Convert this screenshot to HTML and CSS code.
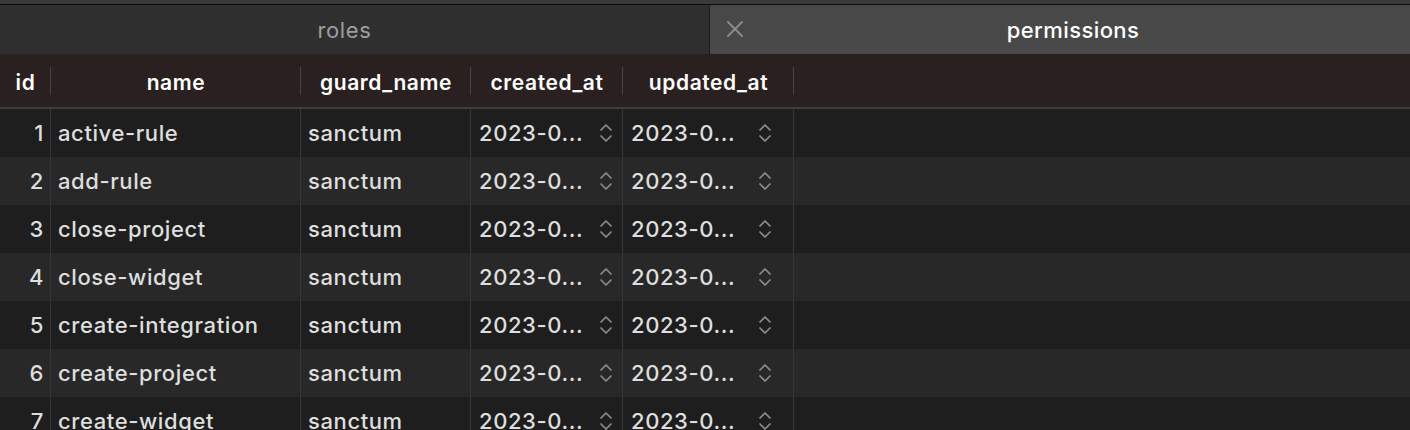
FILE: index.html
```html
<!DOCTYPE html>
<html>
<head>
<meta charset="utf-8">
<link rel="stylesheet" href="styles.css">
</head>
<body>
<div class="app">
  <div class="topstrip"></div>
  <div class="tabs">
    <div class="tab tab-inactive">roles</div>
    <div class="tab tab-active">
      <svg class="close" viewBox="0 0 20 20" width="20" height="20"><path d="M3 3 L17 17 M17 3 L3 17" stroke="#8a8a8a" stroke-width="2" fill="none" stroke-linecap="round"/></svg>
      <span>permissions</span>
    </div>
  </div>
  <div class="grid head">
    <div class="hc">id</div>
    <div class="hc">name</div>
    <div class="hc">guard_name</div>
    <div class="hc">created_at</div>
    <div class="hc">updated_at</div>
    <div class="hc last"></div>
  </div>
  <div class="body" id="body"></div>
</div>
<script src="app.js"></script>
</body>
</html>
```
FILE: app.js
```js
const names = ["active-rule","add-rule","close-project","close-widget","create-integration","create-project","create-widget"];
const spin = '<svg class="spin" viewBox="0 0 16 24" width="16" height="24"><path d="M3 9 L8 4 L13 9 M3 15 L8 20 L13 15" stroke="#8c8c8c" stroke-width="1.7" fill="none" stroke-linecap="round" stroke-linejoin="round"/></svg>';
const body = document.getElementById('body');
names.forEach((n, i) => {
  const r = document.createElement('div');
  r.className = 'grid row ' + (i % 2 ? 'even' : 'odd');
  r.innerHTML =
    '<div class="c id">' + (i + 1) + '</div>' +
    '<div class="c">' + n + '</div>' +
    '<div class="c">sanctum</div>' +
    '<div class="c date d1"><span>2023-0...</span>' + spin + '</div>' +
    '<div class="c date d2"><span>2023-0...</span>' + spin + '</div>' +
    '<div class="c last"></div>';
  body.appendChild(r);
});
```
FILE: styles.css
```css
* { box-sizing: border-box; }
html, body { margin: 0; padding: 0; background: #1e1e1e; }
body { font-family: Inter, "Noto Sans", sans-serif; overflow: hidden; width: 1410px; height: 430px; }
.app { width: 1410px; }
.topstrip { background: #3a3838; border-bottom: 1px solid #0c0c0c; height: 5px; }
.tabs { display: flex; height: 49px; }
.tab { display: flex; align-items: center; justify-content: center; font-size: 22px; letter-spacing: 0.6px; position: relative; }
.tab-inactive { width: 710px; background: #2f2f2f; color: #9e9e9e; border-right: 1px solid #1f1f1f; padding-right: 20px; }
.tab-active { flex: 1; background: #484848; color: #ffffff; padding-left: 26px; font-weight: 500; letter-spacing: 0.4px; }
.close { position: absolute; left: 15px; top: 14px; }
.grid { display: grid; grid-template-columns: 51px 250px 170px 152px 171px 1fr; }
.head { height: 55px; background: #2a201f; border-bottom: 2px solid #3e3a3a; }
.hc { display: flex; align-items: center; justify-content: center; padding-top: 3px; color: #fff; font-weight: 600; font-size: 21px; letter-spacing: 0.6px; position: relative; }
.hc::after { content: ""; position: absolute; right: 0; top: 13px; bottom: 12px; width: 1px; background: #4a4242; }
.hc.last::after { display: none; }
.row { height: 48px; }
.odd { background: #1e1e1e; }
.even { background: #282828; }
.c { display: flex; align-items: center; padding-left: 7px; color: #dedede; font-size: 22px; font-weight: 500; letter-spacing: 0.6px; border-right: 1px solid #363636; white-space: nowrap; }
.c.id { justify-content: flex-end; padding-left: 0; padding-right: 6px; }
.c.last { border-right: none; }
.date { padding-left: 8px; }
.d1 .spin { margin-left: auto; margin-right: 8px; }
.d2 .spin { margin-left: auto; margin-right: 20px; }
```
